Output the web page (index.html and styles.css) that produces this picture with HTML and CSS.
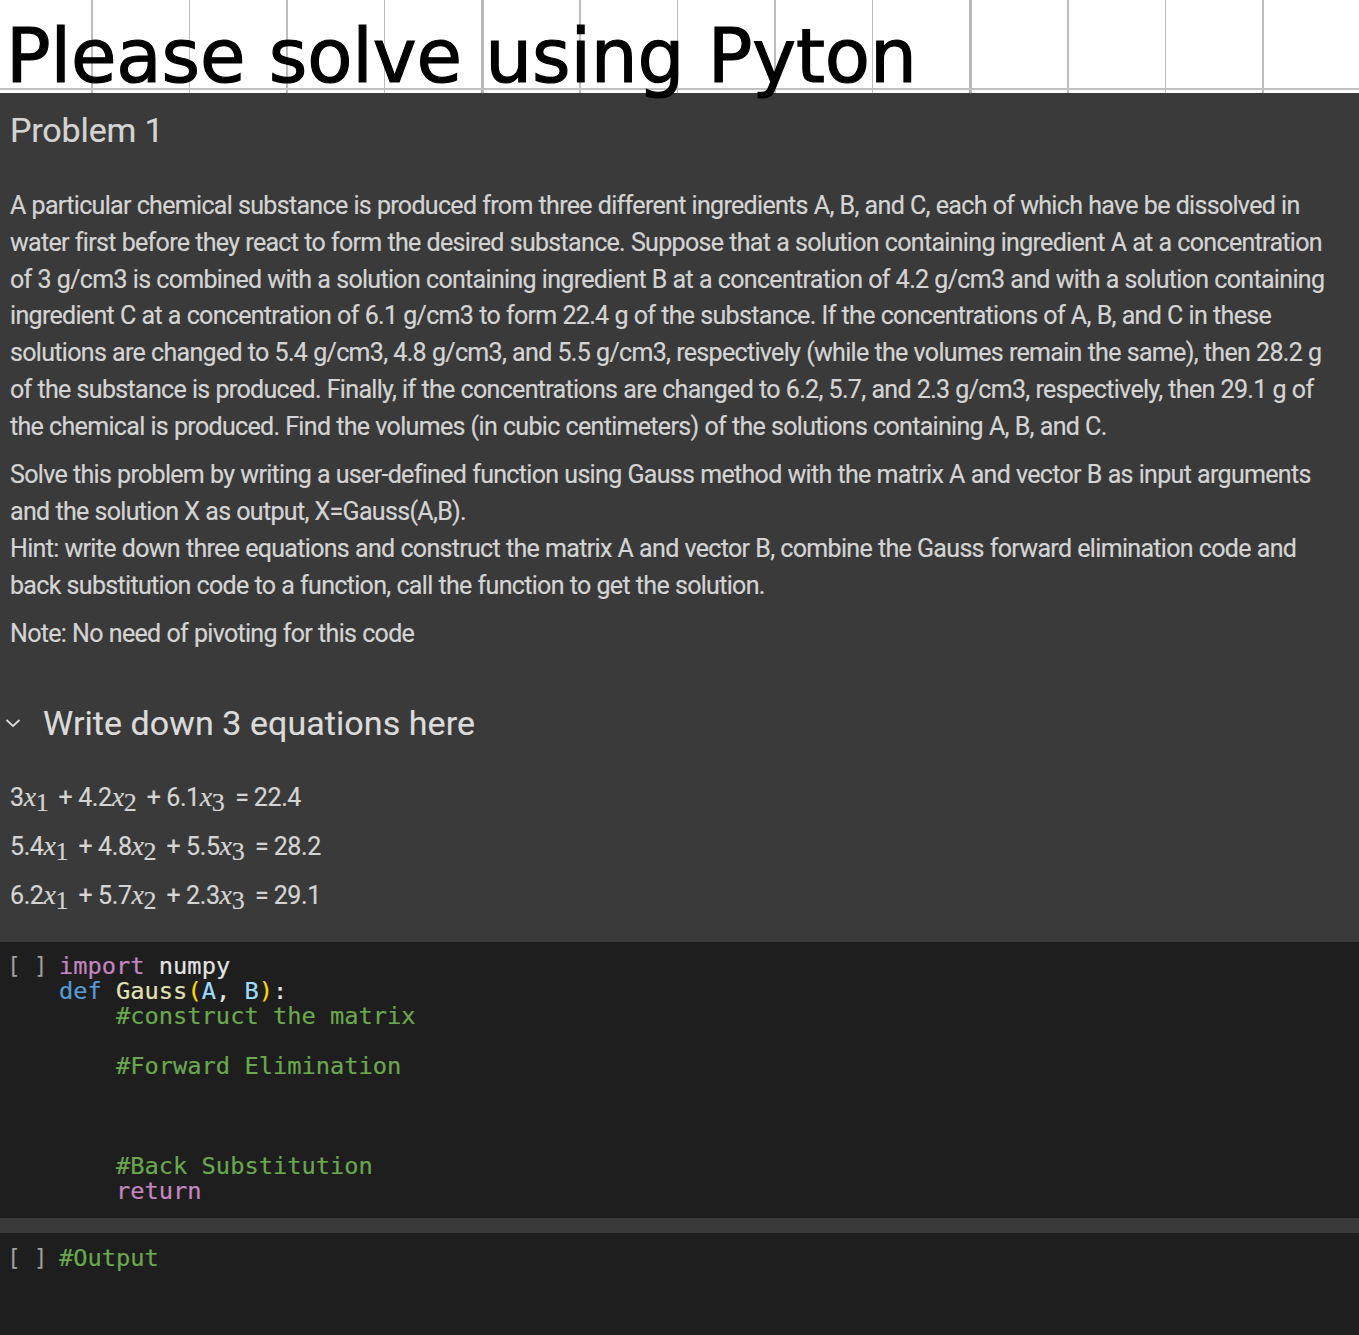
FILE: index.html
```html
<!DOCTYPE html>
<html lang="en">
<head>
<meta charset="utf-8">
<title>Please solve using Pyton</title>
<link rel="stylesheet" href="styles.css">
</head>
<body>
<header class="sheet">
  <h1 class="note">Please solve using Pyton</h1>
</header>
<main class="notebook">
  <section class="markdown">
    <h2 class="problem-title">Problem 1</h2>
    <p class="para first">A particular chemical substance is produced from three different ingredients A, B, and C, each of which have be dissolved in<br>water first before they react to form the desired substance. Suppose that a solution containing ingredient A at a concentration<br>of 3 g/cm3 is combined with a solution containing ingredient B at a concentration of 4.2 g/cm3 and with a solution containing<br>ingredient C at a concentration of 6.1 g/cm3 to form 22.4 g of the substance. If the concentrations of A, B, and C in these<br>solutions are changed to 5.4 g/cm3, 4.8 g/cm3, and 5.5 g/cm3, respectively (while the volumes remain the same), then 28.2 g<br>of the substance is produced. Finally, if the concentrations are changed to 6.2, 5.7, and 2.3 g/cm3, respectively, then 29.1 g of<br>the chemical is produced. Find the volumes (in cubic centimeters) of the solutions containing A, B, and C.</p>
    <p class="para">Solve this problem by writing a user-defined function using Gauss method with the matrix A and vector B as input arguments<br>and the solution X as output, X=Gauss(A,B).<br>Hint: write down three equations and construct the matrix A and vector B, combine the Gauss forward elimination code and<br>back substitution code to a function, call the function to get the solution.</p>
    <p class="para">Note: No need of pivoting for this code</p>
    <div class="section-head">
      <svg class="chevron" viewBox="0 0 16 10" width="16" height="10" aria-hidden="true"><path d="M1.5 2 L8 8 L14.5 2" fill="none" stroke="#d8d8d8" stroke-width="1.8"/></svg>
      <h2 class="section-title">Write down 3 equations here</h2>
    </div>
    <div class="equations">
      <p class="eq">3<i>x</i><sub>1</sub> <span class="op">+ 4.2</span><i>x</i><sub>2</sub> <span class="op">+ 6.1</span><i>x</i><sub>3</sub> <span class="op eq-sign">= 22.4</span></p>
      <p class="eq">5.4<i>x</i><sub>1</sub> <span class="op">+ 4.8</span><i>x</i><sub>2</sub> <span class="op">+ 5.5</span><i>x</i><sub>3</sub> <span class="op eq-sign">= 28.2</span></p>
      <p class="eq">6.2<i>x</i><sub>1</sub> <span class="op">+ 5.7</span><i>x</i><sub>2</sub> <span class="op">+ 2.3</span><i>x</i><sub>3</sub> <span class="op eq-sign">= 29.1</span></p>
    </div>
  </section>
  <section class="cell code-main">
    <div class="prompt">[ ]</div>
    <pre class="code"><span class="kw">import</span> <span class="nm">numpy</span>
<span class="def">def</span> <span class="fn">Gauss</span><span class="par">(</span><span class="arg">A</span><span class="nm">,</span> <span class="arg">B</span><span class="par">)</span><span class="nm">:</span>
    <span class="cm">#construct the matrix</span>

    <span class="cm">#Forward Elimination</span>



    <span class="cm">#Back Substitution</span>
    <span class="kw">return</span></pre>
  </section>
  <section class="cell code-output">
    <div class="prompt">[ ]</div>
    <pre class="code"><span class="cm">#Output</span></pre>
  </section>
</main>
</body>
</html>
```
FILE: styles.css
```css
* { box-sizing: border-box; }
html, body { margin: 0; padding: 0; }
body {
  width: 1359px;
  height: 1335px;
  overflow: hidden;
  background: #fff;
  font-family: Roboto, "Liberation Sans", sans-serif;
}
.sheet {
  height: 93px;
  background-color: #fff;
  background-image:
    linear-gradient(#c0c0c0, #c0c0c0),
    linear-gradient(#b8b8b8, #b8b8b8),
    linear-gradient(#b8b8b8, #b8b8b8),
    repeating-linear-gradient(90deg, transparent 0, transparent 96px, #bdbdbd 96px, #bdbdbd 97.6px);
  background-size: 100% 2px, 3px 100%, 3px 100%, 100% 100%;
  background-position: 0 88px, 481px 0, 969px 0, -5px 0;
  background-repeat: no-repeat;
  padding: 16px 0 0 6px;
  position: relative;
  z-index: 1;
}
.note {
  margin: 0;
  font-family: "Comic Sans MS", "DejaVu Sans", sans-serif;
  font-weight: 400;
  font-size: 74px;
  line-height: 80px;
  letter-spacing: -0.13px;
  color: #000;
  white-space: nowrap;
  -webkit-text-stroke: 1.2px #000;
}
.notebook { background: #3a3a3a; }
.markdown { padding: 0 10px; color: #d4d4d4; height: 849px; -webkit-text-stroke: 0.2px #d4d4d4; }
.problem-title {
  margin: 0;
  padding-top: 15px;
  font-size: 34px;
  line-height: 44px;
  font-weight: 400;
  letter-spacing: -0.15px;
}
.para {
  margin: 0 0 12px;
  font-size: 25px;
  line-height: 36.75px;
  white-space: nowrap;
  letter-spacing: -0.68px;
  word-spacing: 0.4px;
}
.para.first { margin-top: 36px; }
.section-head {
  display: flex;
  align-items: center;
  gap: 22px;
  margin: 47px 0 0 -5px;
  height: 46px;
}
.section-title {
  margin: 0;
  font-size: 34px;
  font-weight: 400;
  letter-spacing: 0.07px;
  color: #dcdcdc;
}
.equations { margin-top: 28px; }
.eq {
  margin: 0;
  height: 49px;
  font-size: 25px;
  line-height: 46px;
  letter-spacing: -0.4px;
  white-space: nowrap;
}
.eq i { font-family: "Liberation Serif", serif; font-size: 28px; }
.eq sub { font-family: "Liberation Serif", serif; font-size: 26px; line-height: 0; vertical-align: -5px; }
.eq .op { margin-left: 4.5px; }
.eq .eq-sign { margin-left: 5px; word-spacing: -0.5px; }
.cell {
  background: #1e1e1e;
  display: flex;
  gap: 17px;
  padding-left: 7px;
}
.code-main { height: 276px; padding-top: 12px; margin-bottom: 15px; }
.code-output { height: 102px; padding-top: 13px; }
.prompt, .code {
  font-family: "DejaVu Sans Mono", "Liberation Mono", monospace;
  font-size: 23.7px;
  line-height: 25px;
}
.prompt { flex: none; color: #a0a0a0; font-size: 23px; width: 35px; word-spacing: -1px; white-space: nowrap; }
.code { margin: 0; color: #e4e4e4; -webkit-text-stroke: 0.2px; }
.kw { color: #c586c0; }
.def { color: #569cd6; }
.fn { color: #e2e2b4; }
.par { color: #ffd700; }
.arg { color: #9cdcfe; }
.nm { color: #e4e4e4; }
.cm { color: #6aa84f; }
```
